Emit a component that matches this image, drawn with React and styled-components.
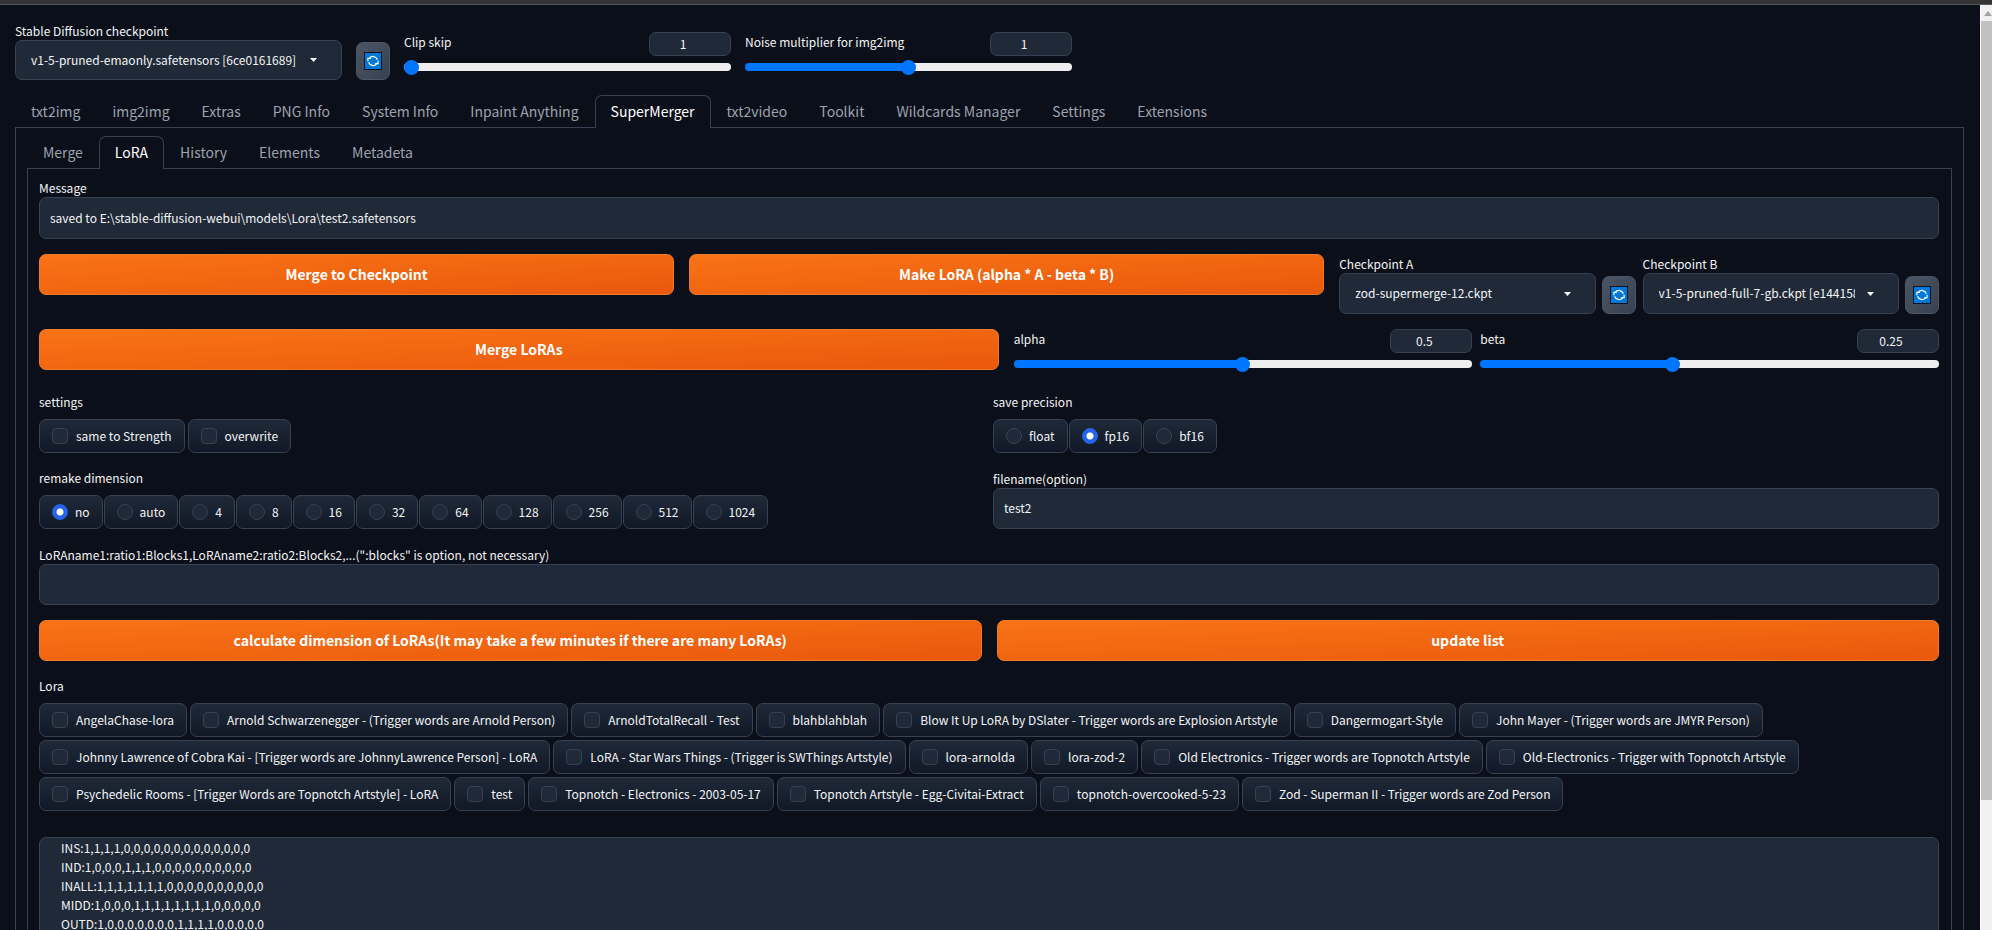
import React, { useState } from "react";
import styled, { createGlobalStyle, css } from "styled-components";

const GlobalStyle = createGlobalStyle`
  *, *::before, *::after { box-sizing: border-box; }
  body { margin: 0; background: #0b0f19; overflow: hidden; }
  body, input, select, button, textarea {
    font-family: "Noto Sans CJK SC", "Open Sans", sans-serif;
  }
`;

const Window = styled.div`
  display: flex;
  flex-direction: column;
  height: 100vh;
  background: #0b0f19;
  color: #f3f4f6;
  font-size: 12px;
`;

const BrowserEdge = styled.div`
  flex: none;
  height: 5px;
  background: #343434;
  border-bottom: 1px solid #55565a;
`;

const Viewport = styled.div`
  display: flex;
  flex: 1;
  min-height: 0;
`;

const Page = styled.main`
  flex: 1;
  min-width: 0;
  overflow-y: auto;
  scrollbar-width: none;
  padding: 16px 16px 0 15px;
`;

const ScrollTrack = styled.div`
  flex: none;
  display: flex;
  flex-direction: column;
  width: 12px;
  background: #f1f1f1;
  border-left: 1px solid #fff;
`;

const ScrollArrow = styled.div`
  flex: none;
  height: 16px;
  display: flex;
  align-items: center;
  justify-content: flex-end;
`;

const ScrollThumb = styled.div`
  flex: 6;
  background: #c1c1c1;
`;

const ScrollRest = styled.div`
  flex: 1;
`;

const QuickSettings = styled.div`
  display: flex;
  gap: 14px;
`;

const Group = styled.div`
  display: flex;
  align-items: flex-end;
  gap: ${(p) => p.$gap || 6}px;
  min-width: 0;
`;

const Field = styled.div`
  display: flex;
  flex-direction: column;
  min-width: 0;
  flex: ${(p) => (p.$width ? "none" : 1)};
  width: ${(p) => (p.$width ? p.$width + "px" : "auto")};
`;

const labelText = css`
  font-size: 12px;
  color: #f3f4f6;
  white-space: nowrap;
`;

const Label = styled.label`
  ${labelText}
  line-height: 19px;
`;

const box = css`
  background: #1f2937;
  border: 1px solid #374151;
  border-radius: 7px;
  color: #f3f4f6;
  outline: none;
`;

const TextInput = styled.input`
  ${box}
  width: 100%;
  height: ${(p) => p.$height || 41}px;
  padding: 0 10px 2px;
  font-size: 12px;
`;

const SelectWrap = styled.div`
  position: relative;
`;

const SelectBox = styled.select`
  ${box}
  appearance: none;
  display: block;
  width: 100%;
  height: ${(p) => p.$height || 41}px;
  padding: 0 43px 2px 15px;
  font-size: 12px;
`;

const Caret = styled.svg`
  position: absolute;
  right: 25px;
  top: 50%;
  margin-top: -2px;
  pointer-events: none;
`;

const RefreshButton = styled.button`
  flex: none;
  display: flex;
  align-items: center;
  justify-content: center;
  width: 34px;
  height: 38px;
  padding: 0;
  border: 1px solid #4b5563;
  border-radius: 7px;
  background: linear-gradient(to bottom right, #4b5563, #374151);
`;

const SliderField = styled.div`
  flex: ${(p) => (p.$width ? "none" : 1)};
  width: ${(p) => (p.$width ? p.$width + "px" : "auto")};
  min-width: 0;
  margin-top: ${(p) => (p.$width ? 11 : 0)}px;
`;

const SliderHead = styled.div`
  display: flex;
  justify-content: space-between;
  align-items: flex-start;
  height: 24px;
`;

const NumberInput = styled.input`
  ${box}
  appearance: textfield;
  width: 82px;
  height: 24px;
  padding: 0 18px 2px 4px;
  text-align: center;
  font-size: 12px;
  &::-webkit-inner-spin-button,
  &::-webkit-outer-spin-button { appearance: none; margin: 0; }
`;

const Range = styled.input`
  appearance: none;
  display: block;
  width: 100%;
  height: 8px;
  margin: 7px 0 0;
  border-radius: 4px;
  background: linear-gradient(
    to right,
    #0075ff ${(p) => p.$fill}%,
    #efefef ${(p) => p.$fill}%
  );
  &::-webkit-slider-thumb {
    appearance: none;
    width: 15px;
    height: 15px;
    border-radius: 50%;
    background: #0075ff;
  }
`;

const TabList = styled.div`
  display: flex;
  position: relative;
  margin-bottom: -1px;
`;

const Tab = styled.button`
  height: 33px;
  padding: 0 15px 2px;
  border: 1px solid ${(p) => (p.$active ? "#374151" : "transparent")};
  border-bottom: 0;
  border-radius: 7px 7px 0 0;
  background: ${(p) => (p.$active ? "#0b0f19" : "transparent")};
  color: ${(p) => (p.$active ? "#ffffff" : "#9ca3af")};
  font-size: 14px;
  line-height: 20px;
  white-space: nowrap;
`;

const OuterTabs = styled.div`
  margin-top: 15px;
`;

const OuterPanel = styled.section`
  border: 1px solid #374151;
  padding: 8px 11px;
`;

const InnerPanel = styled.section`
  border: 1px solid #374151;
  padding: 9px 12px 9px 11px;
`;

const Row = styled.div`
  display: grid;
  grid-template-columns: ${(p) => p.$cols || "1fr"};
  gap: ${(p) => p.$gap || 15}px;
  align-items: start;
  margin-top: ${(p) => p.$top || 0}px;
`;

const PrimaryButton = styled.button`
  height: 41px;
  padding: 0 8px 2px;
  border: 1px solid #ee7a2c;
  border-radius: 7px;
  background: linear-gradient(to bottom right, #f97316, #ea580c);
  color: #ffffff;
  font-size: 14px;
  font-weight: 600;
`;

const Choices = styled.fieldset`
  min-width: 0;
  margin: 0;
  padding: 0;
  border: 0;
`;

const Legend = styled.legend`
  ${labelText}
  line-height: 18px;
  padding: 0;
  margin-bottom: 8px;
`;

const PillRow = styled.div`
  display: flex;
  flex-wrap: wrap;
  gap: ${(p) => (p.$type === "radio" ? "3px 1px" : "3px")};
`;

const Pill = styled.label`
  display: flex;
  align-items: center;
  gap: ${(p) => (p.$type === "radio" ? 7 : 8)}px;
  height: 34px;
  padding: 0 12px;
  border: 1px solid #374151;
  border-radius: 7px;
  background: linear-gradient(to top, #111827, #1f2937);
  font-size: 12px;
  line-height: 18px;
  white-space: nowrap;
`;

const Mark = styled.input`
  appearance: none;
  flex: none;
  width: 16px;
  height: 16px;
  margin: 0;
  border: 1px solid #374151;
  border-radius: ${(p) => (p.type === "radio" ? "50%" : "4px")};
  background: #1f2937;
  &:checked {
    border-color: #2563eb;
    background: ${(p) =>
      p.type === "radio"
        ? "radial-gradient(circle, #fff 0 3px, #2563eb 4px)"
        : "#2563eb"};
  }
`;

const Presets = styled.textarea`
  ${box}
  display: block;
  width: 100%;
  height: 240px;
  margin-top: 26px;
  padding: 0 21px;
  font-size: 12px;
  line-height: 19px;
  resize: none;
`;

function RefreshIcon() {
  return (
    <svg width="18" height="18" viewBox="0 0 18 18" aria-hidden="true">
      <rect x="0.5" y="0.5" width="17" height="17" fill="#0078d7" stroke="#06131f" />
      <g fill="none" stroke="#fff" strokeWidth="1.2">
        <path d="M5.4 6.2A4.6 4.6 0 0 1 13.4 7.7" />
        <path d="M12.6 11.8A4.6 4.6 0 0 1 4.6 10.3" />
        <path d="M3.9 9.2V6.3h2.9" />
        <path d="M14.1 8.8v2.9h-2.9" />
      </g>
    </svg>
  );
}

function Refresh({ label }) {
  return (
    <RefreshButton type="button" aria-label={label}>
      <RefreshIcon />
    </RefreshButton>
  );
}

function Dropdown({ id, label, value, width, height }) {
  return (
    <Field $width={width}>
      <Label htmlFor={id}>{label}</Label>
      <SelectWrap>
        <SelectBox id={id} $height={height} defaultValue={value}>
          <option>{value}</option>
        </SelectBox>
        <Caret width="7" height="4" viewBox="0 0 7 4" aria-hidden="true">
          <path d="M0 0h7L3.5 4z" fill="#fff" />
        </Caret>
      </SelectWrap>
    </Field>
  );
}

function Slider({ id, label, initial, min, max, step, width }) {
  const [value, setValue] = useState(initial);
  const onChange = (e) => setValue(Number(e.target.value));
  const limits = { min, max, step, value, onChange };
  return (
    <SliderField $width={width}>
      <SliderHead>
        <Label htmlFor={id}>{label}</Label>
        <NumberInput type="number" aria-label={label + " value"} {...limits} />
      </SliderHead>
      <Range id={id} type="range" $fill={((value - min) / (max - min)) * 100} {...limits} />
    </SliderField>
  );
}

function ChoiceGroup({ legend, type, name, options, selected }) {
  return (
    <Choices>
      <Legend>{legend}</Legend>
      <PillRow $type={type}>
        {options.map((option) => (
          <Pill key={option} $type={type}>
            <Mark type={type} name={name} defaultChecked={option === selected} />
            <span>{option}</span>
          </Pill>
        ))}
      </PillRow>
    </Choices>
  );
}

function Tabs({ items, active }) {
  return (
    <TabList role="tablist">
      {items.map((item) => (
        <Tab key={item} type="button" role="tab" aria-selected={item === active} $active={item === active}>
          {item}
        </Tab>
      ))}
    </TabList>
  );
}

const MAIN_TABS = [
  "txt2img", "img2img", "Extras", "PNG Info", "System Info", "Inpaint Anything", "SuperMerger",
  "txt2video", "Toolkit", "Wildcards Manager", "Settings", "Extensions",
];

const MERGER_TABS = ["Merge", "LoRA", "History", "Elements", "Metadeta"];

const DIMENSIONS = ["no", "auto", "4", "8", "16", "32", "64", "128", "256", "512", "1024"];

const LORAS = [
  "AngelaChase-lora",
  "Arnold Schwarzenegger - (Trigger words are Arnold Person)",
  "ArnoldTotalRecall - Test",
  "blahblahblah",
  "Blow It Up LoRA by DSlater - Trigger words are Explosion Artstyle",
  "Dangermogart-Style",
  "John Mayer - (Trigger words are JMYR Person)",
  "Johnny Lawrence of Cobra Kai - [Trigger words are JohnnyLawrence Person] - LoRA",
  "LoRA - Star Wars Things - (Trigger is SWThings Artstyle)",
  "lora-arnolda",
  "lora-zod-2",
  "Old Electronics - Trigger words are Topnotch Artstyle",
  "Old-Electronics - Trigger with Topnotch Artstyle",
  "Psychedelic Rooms - [Trigger Words are Topnotch Artstyle] - LoRA",
  "test",
  "Topnotch - Electronics - 2003-05-17",
  "Topnotch Artstyle - Egg-Civitai-Extract",
  "topnotch-overcooked-5-23",
  "Zod - Superman II - Trigger words are Zod Person",
];

const PRESETS = [
  "INS:1,1,1,1,0,0,0,0,0,0,0,0,0,0,0,0,0",
  "IND:1,0,0,0,1,1,1,0,0,0,0,0,0,0,0,0,0",
  "INALL:1,1,1,1,1,1,1,0,0,0,0,0,0,0,0,0,0",
  "MIDD:1,0,0,0,1,1,1,1,1,1,1,1,0,0,0,0,0",
  "OUTD:1,0,0,0,0,0,0,0,1,1,1,1,0,0,0,0,0",
].join("\n");

export default function App() {
  return (
    <Window>
      <GlobalStyle />
      <BrowserEdge />
      <Viewport>
        <Page>
          <QuickSettings>
            <Group $gap={14}>
              <Dropdown id="sd" label="Stable Diffusion checkpoint" value="v1-5-pruned-emaonly.safetensors [6ce0161689]" width={327} height={40} />
              <Refresh label="Refresh checkpoints" />
            </Group>
            <Slider id="clip" label="Clip skip" initial={1} min={1} max={12} step={1} width={327} />
            <Slider id="noise" label="Noise multiplier for img2img" initial={1} min={0.5} max={1.5} step={0.01} width={327} />
          </QuickSettings>

          <OuterTabs>
            <Tabs items={MAIN_TABS} active="SuperMerger" />
            <OuterPanel>
              <Tabs items={MERGER_TABS} active="LoRA" />
              <InnerPanel>
                <Field>
                  <Label htmlFor="message">Message</Label>
                  <TextInput id="message" $height={42} defaultValue="saved to E:\stable-diffusion-webui\models\Lora\test2.safetensors" />
                </Field>

                <Row $cols="18fr 18fr 17fr" $top={15}>
                  <PrimaryButton type="button">Merge to Checkpoint</PrimaryButton>
                  <PrimaryButton type="button">Make LoRA (alpha * A - beta * B)</PrimaryButton>
                  <Row $cols="1fr 1fr" $gap={7}>
                    <Group>
                      <Dropdown id="a" label="Checkpoint A" value="zod-supermerge-12.ckpt" />
                      <Refresh label="Refresh checkpoint A" />
                    </Group>
                    <Group>
                      <Dropdown id="b" label="Checkpoint B" value="v1-5-pruned-full-7-gb.ckpt [e1441589a6]" />
                      <Refresh label="Refresh checkpoint B" />
                    </Group>
                  </Row>
                </Row>

                <Row $cols="28fr 27fr" $top={15}>
                  <PrimaryButton type="button">Merge LoRAs</PrimaryButton>
                  <Row $cols="1fr 1fr" $gap={8}>
                    <Slider id="alpha" label="alpha" initial={0.5} min={-1} max={2} step={0.001} />
                    <Slider id="beta" label="beta" initial={0.25} min={-1} max={2} step={0.001} />
                  </Row>
                </Row>

                <Row $cols="1fr 1fr" $gap={8} $top={23}>
                  <ChoiceGroup legend="settings" type="checkbox" name="settings" options={["same to Strength", "overwrite"]} />
                  <ChoiceGroup legend="save precision" type="radio" name="precision" options={["float", "fp16", "bf16"]} selected="fp16" />
                </Row>

                <Row $cols="1fr 1fr" $gap={8} $top={16}>
                  <ChoiceGroup legend="remake dimension" type="radio" name="dimension" options={DIMENSIONS} selected="no" />
                  <Field>
                    <Label htmlFor="filename">filename(option)</Label>
                    <TextInput id="filename" defaultValue="test2" />
                  </Field>
                </Row>

                <Row $top={16}>
                  <Field>
                    <Label htmlFor="names">{'LoRAname1:ratio1:Blocks1,LoRAname2:ratio2:Blocks2,...(":blocks" is option, not necessary)'}</Label>
                    <TextInput id="names" />
                  </Field>
                </Row>

                <Row $cols="1fr 1fr" $top={15}>
                  <PrimaryButton type="button">calculate dimension of LoRAs(It may take a few minutes if there are many LoRAs)</PrimaryButton>
                  <PrimaryButton type="button">update list</PrimaryButton>
                </Row>

                <Row $top={16}>
                  <ChoiceGroup legend="Lora" type="checkbox" name="lora" options={LORAS} />
                </Row>

                <Presets aria-label="Block weight presets" defaultValue={PRESETS} />
              </InnerPanel>
            </OuterPanel>
          </OuterTabs>
        </Page>
        <ScrollTrack>
          <ScrollArrow>
            <svg width="8" height="5" viewBox="0 0 8 5" aria-hidden="true">
              <path d="M4 0L8 5H0z" fill="#a3a3a3" />
            </svg>
          </ScrollArrow>
          <ScrollThumb />
          <ScrollRest />
        </ScrollTrack>
      </Viewport>
    </Window>
  );
}
